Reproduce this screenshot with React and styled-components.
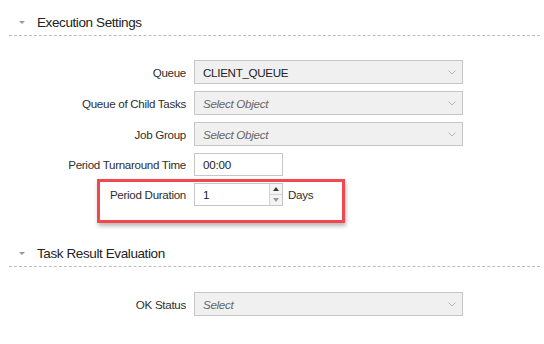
import React from "react";
import styled, { createGlobalStyle } from "styled-components";

const GlobalStyle = createGlobalStyle`
  html, body {
    margin: 0;
    padding: 0;
    background: #ffffff;
  }
  body {
    font-family: "Liberation Sans", Arial, sans-serif;
    color: #333333;
  }
`;

const Page = styled.div`
  width: 544px;
  height: 344px;
  padding: 0 4px 0 9px;
  box-sizing: border-box;
  overflow: hidden;
`;

const Section = styled.section`
  margin-top: ${(p) => p.$top}px;
`;

const SectionHeader = styled.div`
  display: flex;
  align-items: center;
  gap: 12px;
  height: 20px;
  padding: 0 0 3px 10px;
  border-bottom: 1px dashed #bdbdbd;
  font-size: 13.5px;
  letter-spacing: -0.4px;
  color: #222222;
`;

const Caret = styled.span`
  width: 0;
  height: 0;
  border-left: 3.5px solid transparent;
  border-right: 3.5px solid transparent;
  border-top: 3px solid #9a9a9a;
`;

const Rows = styled.div`
  display: flex;
  flex-direction: column;
  gap: ${(p) => p.$gap || 7}px;
  margin-top: ${(p) => p.$top}px;
`;

const Row = styled.div`
  position: relative;
  display: grid;
  grid-template-columns: 177px auto;
  column-gap: 8px;
  align-items: center;
`;

const Label = styled.label`
  text-align: right;
  font-size: 11.6px;
  letter-spacing: -0.3px;
  color: #2e2e2e;
`;

const Select = styled.div`
  display: flex;
  align-items: center;
  justify-content: space-between;
  width: 269px;
  height: 24px;
  box-sizing: border-box;
  padding: 0 6px 0 8px;
  background: #f0f0f0;
  border: 1px solid #c6c6c6;
  font-size: 11.6px;
  letter-spacing: -0.3px;
  color: ${(p) => (p.$placeholder ? "#666666" : "#222222")};
  font-style: ${(p) => (p.$placeholder ? "italic" : "normal")};
`;

const Chevron = () => (
  <svg width="8" height="5" viewBox="0 0 8 5">
    <path d="M0.5 0.5 L4 4 L7.5 0.5" fill="none" stroke="#b5b5b5" strokeWidth="1" />
  </svg>
);

const Field = styled.div`
  display: flex;
  align-items: center;
  gap: 5px;
`;

const TextBox = styled.div`
  display: flex;
  align-items: center;
  width: 89px;
  height: 23px;
  box-sizing: border-box;
  padding-left: 8px;
  background: #ffffff;
  border: 1px solid #c6c6c6;
  font-size: 11.6px;
  letter-spacing: -0.2px;
  color: #222222;
`;

const NumberBox = styled(TextBox)`
  justify-content: space-between;
  padding-right: 0;
`;

const Spinner = styled.div`
  display: flex;
  flex-direction: column;
  width: 12px;
  height: 100%;
  border-left: 1px solid #d4d4d4;
  background: #f4f4f4;
`;

const SpinHalf = styled.div`
  flex: 1;
  display: flex;
  align-items: center;
  justify-content: center;
  & + & {
    border-top: 1px solid #d4d4d4;
  }
  &::after {
    content: "";
    width: 0;
    height: 0;
    border-left: 3.5px solid transparent;
    border-right: 3.5px solid transparent;
    ${(p) =>
      p.$up
        ? "border-bottom: 4px solid #3a3a3a;"
        : "border-top: 4px solid #9a9a9a;"}
  }
`;

const Unit = styled.span`
  font-size: 11.6px;
  letter-spacing: -0.3px;
  color: #2e2e2e;
`;

const Highlight = styled.div`
  position: absolute;
  left: 88px;
  top: -4px;
  width: 248px;
  height: 44px;
  box-sizing: border-box;
  border: 3px solid #f2474c;
  box-shadow: 1px 3px 4px rgba(0, 0, 0, 0.28);
  pointer-events: none;
`;

function App() {
  return (
    <>
      <GlobalStyle />
      <Page>
        <Section $top={12}>
          <SectionHeader>
            <Caret />
            Execution Settings
          </SectionHeader>
          <Rows $top={24}>
            <Row>
              <Label>Queue</Label>
              <Select>
                CLIENT_QUEUE
                <Chevron />
              </Select>
            </Row>
            <Row>
              <Label>Queue of Child Tasks</Label>
              <Select $placeholder>
                Select Object
                <Chevron />
              </Select>
            </Row>
            <Row>
              <Label>Job Group</Label>
              <Select $placeholder>
                Select Object
                <Chevron />
              </Select>
            </Row>
            <Row>
              <Label>Period Turnaround Time</Label>
              <TextBox>00:00</TextBox>
            </Row>
            <Row>
              <Label>Period Duration</Label>
              <Field>
                <NumberBox>
                  1
                  <Spinner>
                    <SpinHalf $up />
                    <SpinHalf />
                  </Spinner>
                </NumberBox>
                <Unit>Days</Unit>
              </Field>
              <Highlight />
            </Row>
          </Rows>
        </Section>
        <Section $top={37}>
          <SectionHeader>
            <Caret />
            Task Result Evaluation
          </SectionHeader>
          <Rows $top={25}>
            <Row>
              <Label>OK Status</Label>
              <Select $placeholder>
                Select
                <Chevron />
              </Select>
            </Row>
          </Rows>
        </Section>
      </Page>
    </>
  );
}

export default App;
